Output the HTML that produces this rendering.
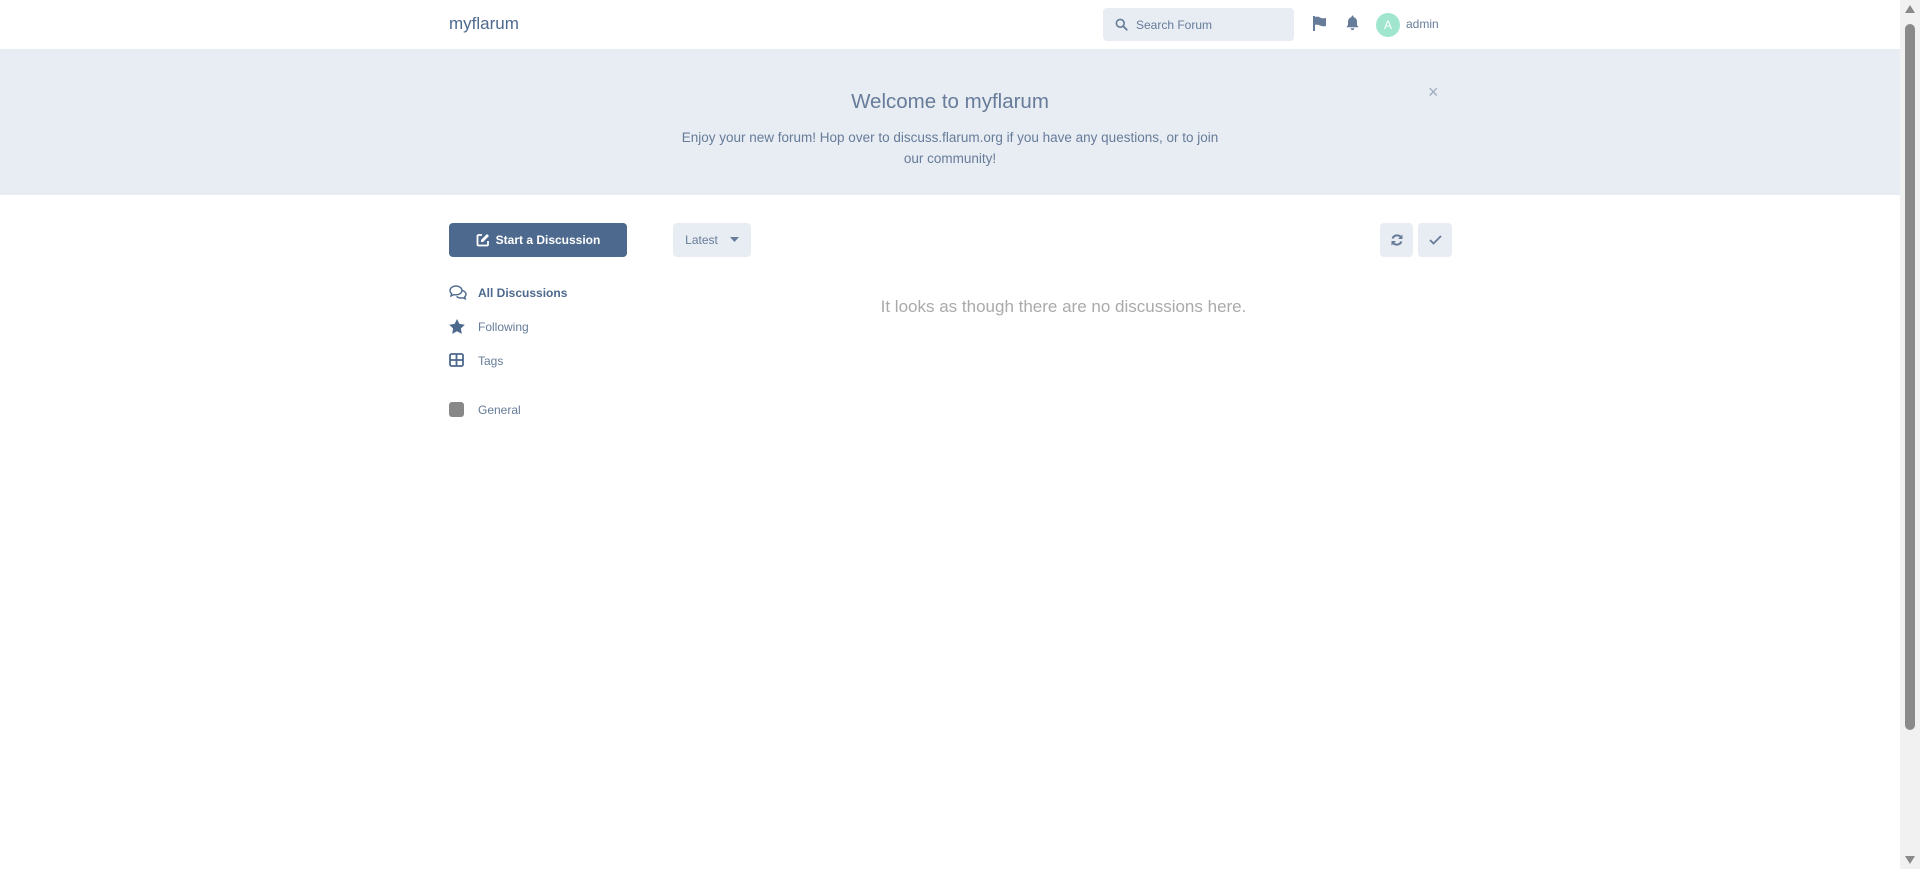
<!DOCTYPE html>
<html><head><meta charset="utf-8"><style>
*{margin:0;padding:0;box-sizing:border-box}
body{width:1920px;height:869px;overflow:hidden;background:#fff;font-family:"Liberation Sans",sans-serif;position:relative;color:#4d698e}
.a{position:absolute}
.btn{border-radius:4px;display:flex;align-items:center;justify-content:center}
</style></head><body>
<div class="a" style="left:449px;top:14px;font-size:17px;color:#4d698e">myflarum</div>
<div class="a btn" style="left:1103px;top:8px;width:191px;height:33px;background:#e8ecf3;justify-content:flex-start;padding-left:12px;font-size:12px;color:#667c99">
<svg width="13" height="13" viewBox="0 0 16 16" style="margin-right:8px"><circle cx="6.5" cy="6.5" r="4.8" fill="none" stroke="#667c99" stroke-width="2"/><path d="M10 10l4.5 4.5" stroke="#667c99" stroke-width="2.2" stroke-linecap="round"/></svg>Search Forum</div>
<svg class="a" style="left:1313px;top:16px" width="14" height="15" viewBox="0 0 14 15"><rect x="0" y="0" width="2" height="15" fill="#667c99"/><path d="M2 1Q5 0 7 1.5T13 2V10Q10 11 7 9.5T2 9Z" fill="#667c99"/></svg>
<svg class="a" style="left:1346px;top:15px" width="13" height="16" viewBox="0 0 13 16"><path d="M6.5 0.5a1 1 0 0 1 1 1v0.6A4.5 4.5 0 0 1 11 6.5V10l1.6 2.2H0.4L2 10V6.5A4.5 4.5 0 0 1 5.5 2.1V1.5a1 1 0 0 1 1-1z" fill="#667c99"/><path d="M4.7 13.3a1.8 1.8 0 0 0 3.6 0z" fill="#667c99"/></svg>
<div class="a" style="left:1376px;top:13px;width:24px;height:24px;border-radius:50%;background:#a0e6cf;color:#fff;font-size:12px;display:flex;align-items:center;justify-content:center">A</div>
<div class="a" style="left:1406px;top:17px;font-size:12px;color:#667c99">admin</div>
<div class="a" style="left:0;top:49px;width:1900px;height:146px;background:#e8ecf3"></div>
<div class="a" style="left:0;top:90px;width:1900px;text-align:center;font-size:20.5px;color:#667c99">Welcome to myflarum</div>
<div class="a" style="left:600px;top:127px;width:700px;text-align:center;font-size:13.5px;line-height:21px;color:#667c99">Enjoy your new forum! Hop over to discuss.flarum.org if you have any questions, or to join<br>our community!</div>
<div class="a" style="left:1428px;top:82px;font-size:18px;color:#9fadc0">×</div>
<div class="a btn" style="left:449px;top:223px;width:178px;height:34px;background:#4d698e;color:#fff;font-size:12px;font-weight:bold">
<svg width="14" height="14" viewBox="0 0 14 14" style="margin-right:6px"><path d="M6 2H2.5A1 1 0 0 0 1.5 3v8.5a1 1 0 0 0 1 1H11a1 1 0 0 0 1-1V8" fill="none" stroke="#fff" stroke-width="1.8"/><path d="M11 1l2 2-6 6H5V7z" fill="#fff"/></svg>Start a Discussion</div>
<div class="a btn" style="left:673px;top:223px;width:78px;height:34px;background:#e8ecf3;color:#667c99;font-size:12px">Latest<svg width="9" height="6" viewBox="0 0 9 6" style="margin-left:12px"><path d="M0 0h9L4.5 5z" fill="#667c99"/></svg></div>
<div class="a btn" style="left:1380px;top:223px;width:33px;height:34px;background:#e8ecf3">
<svg width="14" height="14" viewBox="0 0 14 14"><path d="M11.5 5A5 5 0 0 0 2.5 5.5M2.5 9a5 5 0 0 0 9-0.5" fill="none" stroke="#667c99" stroke-width="2"/><path d="M12.5 1.5v4.5H8z M1.5 12.5V8H6z" fill="#667c99"/></svg></div>
<div class="a btn" style="left:1418px;top:223px;width:34px;height:34px;background:#e8ecf3">
<svg width="13" height="10" viewBox="0 0 13 10"><path d="M1 5l3.5 3.5L12 1" fill="none" stroke="#667c99" stroke-width="1.8"/></svg></div>
<svg class="a" style="left:449px;top:285px" width="18" height="15" viewBox="0 0 18 15"><path d="M7 1C3.7 1 1 3 1 5.5c0 1.2.6 2.3 1.6 3.1L2 11l2.8-1.4c.7.2 1.4.3 2.2.3 3.3 0 6-2 6-4.4S10.3 1 7 1z" fill="none" stroke="#4d698e" stroke-width="1.4"/><path d="M13.5 5.5c2 .7 3.5 2.1 3.5 3.8 0 1-.5 1.9-1.3 2.5l.5 2-2.3-1.1c-.6.2-1.3.3-2 .3-1.8 0-3.4-.6-4.3-1.6" fill="none" stroke="#4d698e" stroke-width="1.4"/></svg>
<div class="a" style="left:478px;top:286px;font-size:12px;font-weight:bold;color:#4d698e">All Discussions</div>
<svg class="a" style="left:449px;top:319px" width="16" height="15" viewBox="0 0 16 15"><path d="M8 0l2.4 4.9 5.4.8-3.9 3.8.9 5.4L8 12.3 3.2 14.9l.9-5.4L.2 5.7l5.4-.8z" fill="#4d698e"/></svg>
<div class="a" style="left:478px;top:320px;font-size:12px;color:#667c99">Following</div>
<svg class="a" style="left:449px;top:353px" width="15" height="14" viewBox="0 0 15 14"><rect x="1" y="1" width="13" height="12" rx="1.5" fill="none" stroke="#4d698e" stroke-width="1.8"/><path d="M7.5 1v12M1 7h13" stroke="#4d698e" stroke-width="1.8"/></svg>
<div class="a" style="left:478px;top:354px;font-size:12px;color:#667c99">Tags</div>
<div class="a" style="left:449px;top:402px;width:15px;height:15px;border-radius:3px;background:#888"></div>
<div class="a" style="left:478px;top:403px;font-size:12px;color:#667c99">General</div>
<div class="a" style="left:700px;top:297px;width:727px;text-align:center;font-size:17px;color:#aaa">It looks as though there are no discussions here.</div>
<div class="a" style="left:1900px;top:0;width:20px;height:869px;background:#f1f1f1"></div>
<div class="a" style="left:1905px;top:24px;width:10px;height:706px;border-radius:5px;background:#8a8a8a"></div>
<svg class="a" style="left:1905px;top:5px" width="10" height="8"><path d="M5 0l5 8H0z" fill="#8a8a8a"/></svg>
<svg class="a" style="left:1905px;top:856px" width="10" height="8"><path d="M0 0h10L5 8z" fill="#8a8a8a"/></svg>
</body></html>
